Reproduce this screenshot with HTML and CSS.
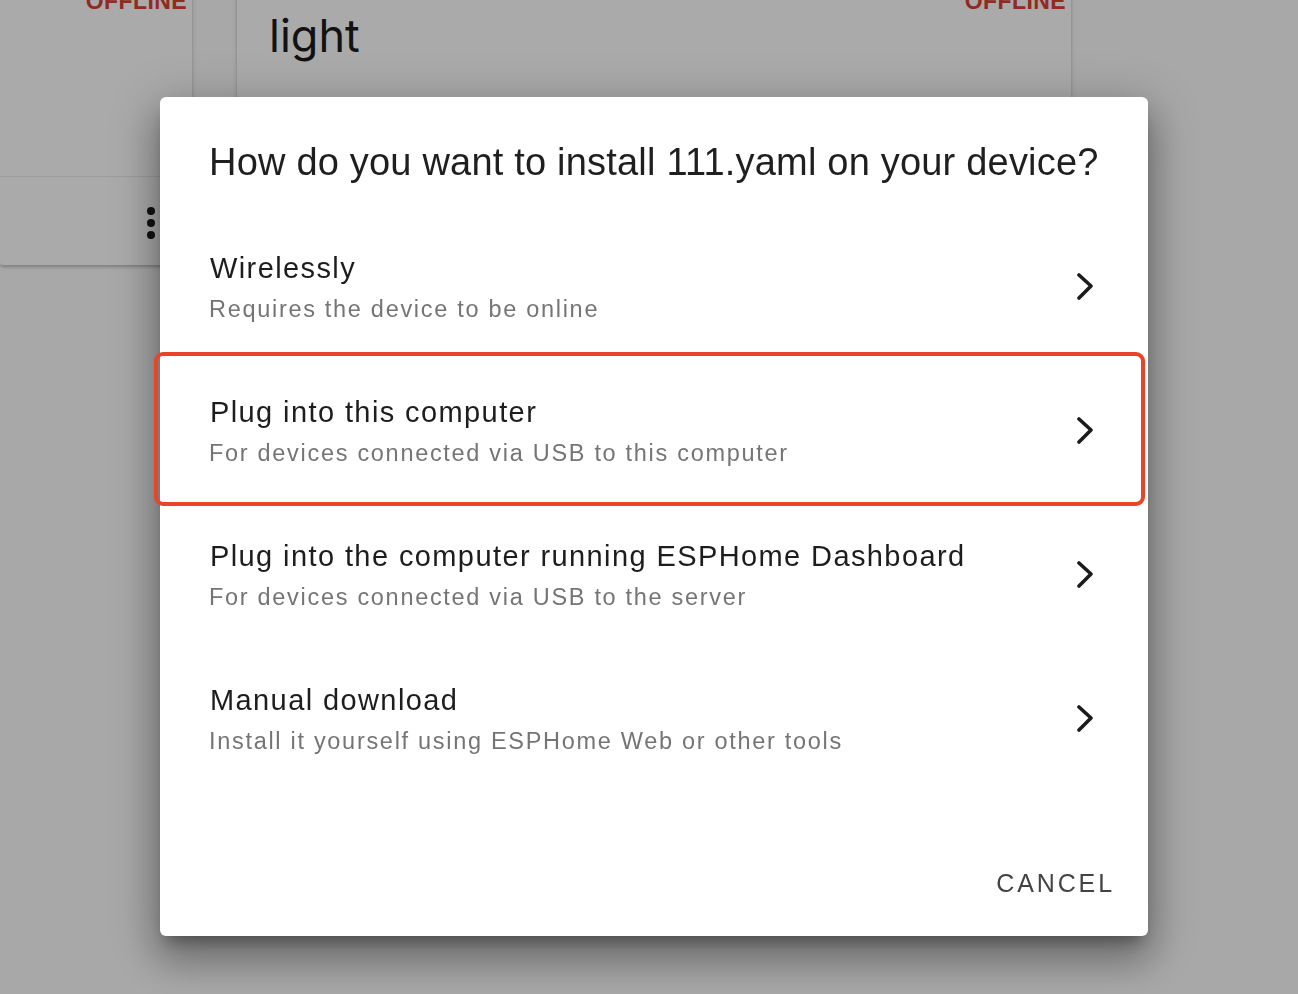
FILE: index.html
```html
<!DOCTYPE html>
<html>
<head>
<meta charset="utf-8">
<link rel="stylesheet" href="styles.css">
</head>
<body>
<div class="page">
  <div class="cards">
    <div class="card card-small">
      <div class="card-top">
        <span class="offline">OFFLINE</span>
      </div>
      <div class="card-actions">
        <svg class="dots" width="10" height="34" viewBox="0 0 10 34"><circle cx="5" cy="5" r="4"/><circle cx="5" cy="17" r="4"/><circle cx="5" cy="29" r="4"/></svg>
      </div>
    </div>
    <div class="card card-wide">
      <div class="card-head">
        <span class="card-name">light</span>
        <span class="offline">OFFLINE</span>
      </div>
    </div>
  </div>
</div>

<div class="scrim">
  <div class="dialog">
    <h2 class="title">How do you want to install 111.yaml on your device?</h2>
    <ul class="list">
      <li class="item">
        <div class="texts">
          <span class="primary">Wirelessly</span>
          <span class="secondary">Requires the device to be online</span>
        </div>
        <svg class="chev" width="24" height="28" viewBox="0 0 24 28"><polyline points="7,2 19,13 7,25" /></svg>
      </li>
      <li class="item">
        <div class="texts">
          <span class="primary">Plug into this computer</span>
          <span class="secondary">For devices connected via USB to this computer</span>
        </div>
        <svg class="chev" width="24" height="28" viewBox="0 0 24 28"><polyline points="7,2 19,13 7,25" /></svg>
      </li>
      <li class="item">
        <div class="texts">
          <span class="primary">Plug into the computer running ESPHome Dashboard</span>
          <span class="secondary">For devices connected via USB to the server</span>
        </div>
        <svg class="chev" width="24" height="28" viewBox="0 0 24 28"><polyline points="7,2 19,13 7,25" /></svg>
      </li>
      <li class="item">
        <div class="texts">
          <span class="primary">Manual download</span>
          <span class="secondary">Install it yourself using ESPHome Web or other tools</span>
        </div>
        <svg class="chev" width="24" height="28" viewBox="0 0 24 28"><polyline points="7,2 19,13 7,25" /></svg>
      </li>
    </ul>
    <div class="actions">
      <button class="cancel">CANCEL</button>
    </div>
    <div class="highlight"></div>
  </div>
</div>
</body>
</html>
```

FILE: styles.css
```css
* { box-sizing: border-box; }
html, body {
  margin: 0;
  padding: 0;
  width: 1298px;
  height: 994px;
  overflow: hidden;
  background: #a8a8a8;
  font-family: "Liberation Sans", Arial, sans-serif;
}
.page {
  position: relative;
  height: 994px;
}
.cards {
  display: flex;
  align-items: flex-start;
  gap: 45px;
  margin-top: -60px;
}
.card {
  background: #aaaaaa;
  box-shadow: 0 2px 3px rgba(0,0,0,0.18), 0 1px 6px rgba(0,0,0,0.10);
  border-radius: 0 0 3px 3px;
}
.card-small {
  width: 192px;
  height: 325px;
  display: flex;
  flex-direction: column;
}
.card-top {
  height: 237px;
  border-bottom: 1px solid #9c9c9c;
  display: flex;
  justify-content: flex-end;
  padding-right: 5px;
}
.offline {
  color: #922a1f;
  font-weight: 700;
  font-size: 23px;
  letter-spacing: 0.4px;
  line-height: 1;
  margin-top: 50px;
}
.card-actions {
  flex: 1;
  display: flex;
  justify-content: flex-end;
  align-items: center;
  padding-right: 36px;
}
.dots { fill: #111; display: block; margin-top: 4px; }
.card-wide {
  width: 834px;
  height: 300px;
}
.card-head {
  display: flex;
  justify-content: space-between;
  align-items: flex-start;
  padding: 0 5px 0 32px;
}
.card-name {
  font-family: "Inter", "Liberation Sans", sans-serif;
  font-size: 45px;
  color: #121212;
  margin-top: 73px;
  line-height: 1;
}
.card-head .offline { margin-top: 50px; }

.scrim {
  position: fixed;
  inset: 0;
}
.dialog {
  position: absolute;
  left: 160px;
  top: 97px;
  width: 988px;
  height: 839px;
  background: #fff;
  border-radius: 6px;
  box-shadow: 0 11px 15px -7px rgba(0,0,0,0.35), 0 24px 38px 3px rgba(0,0,0,0.24), 0 9px 46px 8px rgba(0,0,0,0.18);
  display: flex;
  flex-direction: column;
}
.title {
  margin: 0;
  padding: 45px 30px 0 49px;
  font-weight: 400;
  font-size: 38px;
  line-height: 40px;
  color: #1f1f1f;
  letter-spacing: 0.2px;
  white-space: nowrap;
}
.list {
  list-style: none;
  margin: 0;
  padding: 0;
  margin-top: 33px;
}
.item {
  height: 144px;
  display: flex;
  align-items: center;
  justify-content: space-between;
  padding: 0 52px 0 49px;
}
.texts {
  display: flex;
  flex-direction: column;
}
.primary {
  font-size: 29px;
  line-height: 36px;
  color: #1d1d1d;
  letter-spacing: 1.4px;
  padding-left: 1px;
}
.secondary {
  font-size: 23.5px;
  line-height: 30px;
  margin-top: 8px;
  color: #757575;
  letter-spacing: 1.7px;
}
.chev {
  display: block;
  fill: none;
  stroke: #1b1b1b;
  stroke-width: 3.6;
  stroke-linecap: round;
  stroke-linejoin: round;
}
.actions {
  margin-top: auto;
  display: flex;
  justify-content: flex-end;
  padding: 0 33px 38px 0;
}
.cancel {
  background: none;
  border: none;
  padding: 0;
  font-family: "Liberation Sans", Arial, sans-serif;
  font-size: 25px;
  letter-spacing: 2.9px;
  color: #434343;
  line-height: 30px;
}
.highlight {
  position: absolute;
  left: -6px;
  top: 255px;
  width: 991px;
  height: 154px;
  border: 4px solid #e9432a;
  border-radius: 9px;
  pointer-events: none;
}
```
